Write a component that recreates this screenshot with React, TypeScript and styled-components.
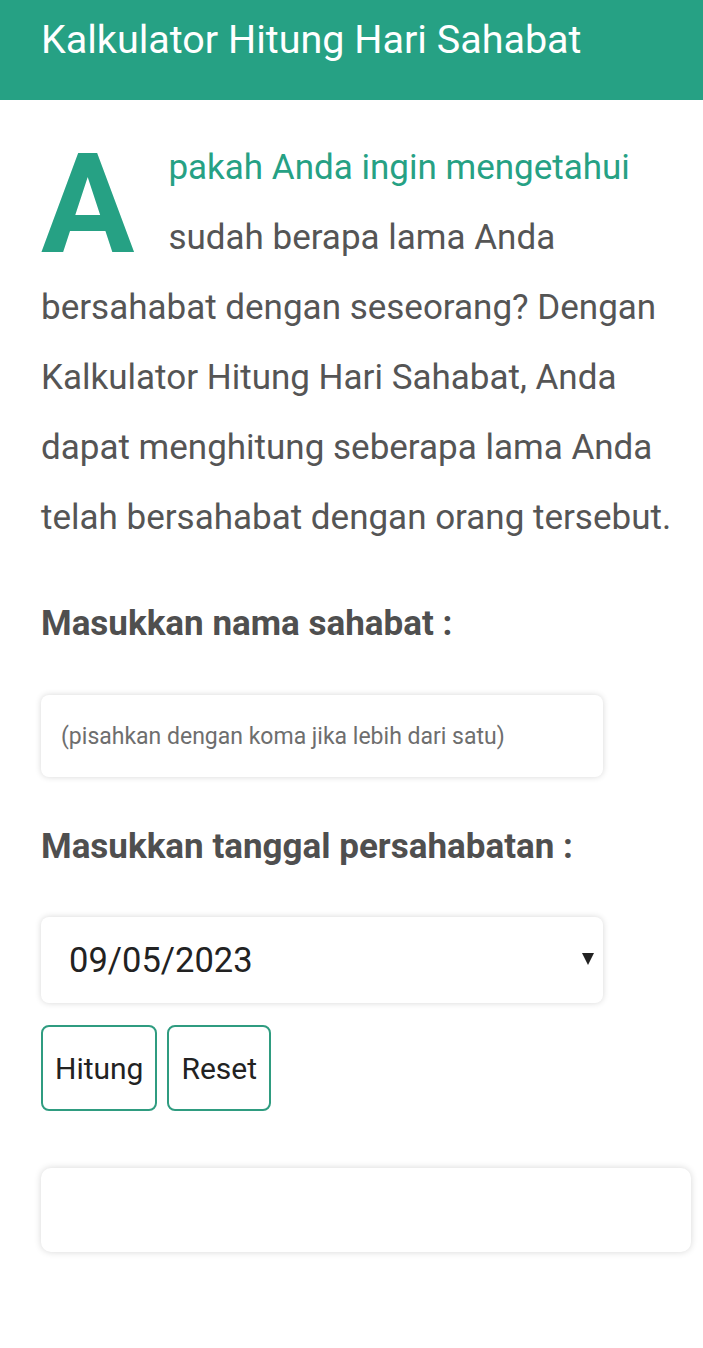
import React from 'react';
import styled, { createGlobalStyle } from 'styled-components';

const GlobalStyle = createGlobalStyle`
  html, body {
    margin: 0;
    padding: 0;
    background: #ffffff;
    font-family: Roboto, "Noto Sans", "Liberation Sans", sans-serif;
  }
`;

const green = '#26a184';

const Header = styled.header`
  height: 100px;
  box-sizing: border-box;
  padding: 17px 41px 0;
  background: ${green};
`;

const Title = styled.h1`
  margin: 0;
  font-size: 39.5px;
  font-weight: 400;
  line-height: 46px;
  color: #ffffff;
`;

const Main = styled.main`
  display: flex;
  flex-direction: column;
  align-items: flex-start;
  padding: 33px 12px 90px 41px;
`;

const Intro = styled.p`
  margin: 0;
  font-size: 35px;
  line-height: 70px;
  color: #555555;
`;

const DropCap = styled.span`
  float: left;
  margin: 16px 34px 0 0;
  font-size: 139px;
  font-weight: 700;
  line-height: 112px;
  color: ${green};
`;

const Lead = styled.span`
  color: ${green};
`;

const Label = styled.label<{ $top: number }>`
  margin-top: ${(p) => p.$top}px;
  font-size: 35px;
  font-weight: 700;
  line-height: 41px;
  color: #4f4f4f;
`;

const Field = styled.div<{ $top: number }>`
  position: relative;
  margin-top: ${(p) => p.$top}px;
  width: 562px;
`;

const TextInput = styled.input`
  display: block;
  width: 100%;
  height: 82px;
  box-sizing: border-box;
  padding: 0 20px;
  border: none;
  border-radius: 8px;
  background: #ffffff;
  box-shadow: 0 0 6px rgba(0, 0, 0, 0.16);
  font-family: inherit;
  font-size: 23px;
  color: #222222;
  outline: none;

  &::placeholder {
    color: #6e6e6e;
  }
`;

const DateSelect = styled.select`
  display: block;
  width: 100%;
  height: 86px;
  box-sizing: border-box;
  padding: 0 40px 0 28px;
  border: none;
  border-radius: 8px;
  background: #ffffff;
  box-shadow: 0 0 6px rgba(0, 0, 0, 0.16);
  font-family: inherit;
  font-size: 34.5px;
  color: #222222;
  appearance: none;
  -webkit-appearance: none;
  outline: none;
`;

const Arrow = styled.span`
  position: absolute;
  right: 9px;
  top: 36px;
  width: 0;
  height: 0;
  border-left: 6.5px solid transparent;
  border-right: 6.5px solid transparent;
  border-top: 12px solid #222222;
  pointer-events: none;
`;

const Buttons = styled.div`
  display: flex;
  gap: 10px;
  margin-top: 22px;
`;

const Button = styled.button`
  height: 86px;
  box-sizing: border-box;
  padding: 0 12px;
  border: 2px solid #2f9c80;
  border-radius: 8px;
  background: #ffffff;
  font-family: inherit;
  font-size: 30px;
  color: #222222;
`;

const Result = styled.div`
  margin-top: 57px;
  width: 650px;
  height: 84px;
  border-radius: 10px;
  background: #ffffff;
  box-shadow: 0 0 7px rgba(0, 0, 0, 0.16);
`;

export default function App() {
  return (
    <>
      <GlobalStyle />
      <Header>
        <Title>Kalkulator Hitung Hari Sahabat</Title>
      </Header>
      <Main>
        <Intro>
          <DropCap>A</DropCap>
          <Lead>pakah Anda ingin mengetahui</Lead> sudah berapa lama Anda
          bersahabat dengan seseorang? Dengan Kalkulator Hitung Hari Sahabat,
          Anda dapat menghitung seberapa lama Anda telah bersahabat dengan
          orang tersebut.
        </Intro>
        <Label $top={50} htmlFor="nama">Masukkan nama sahabat :</Label>
        <Field $top={51}>
          <TextInput id="nama" placeholder="(pisahkan dengan koma jika lebih dari satu)" />
        </Field>
        <Label $top={49} htmlFor="tanggal">Masukkan tanggal persahabatan :</Label>
        <Field $top={50}>
          <DateSelect id="tanggal" defaultValue="2023-05-09">
            <option value="2023-05-09">09/05/2023</option>
          </DateSelect>
          <Arrow />
        </Field>
        <Buttons>
          <Button>Hitung</Button>
          <Button>Reset</Button>
        </Buttons>
        <Result />
      </Main>
    </>
  );
}
